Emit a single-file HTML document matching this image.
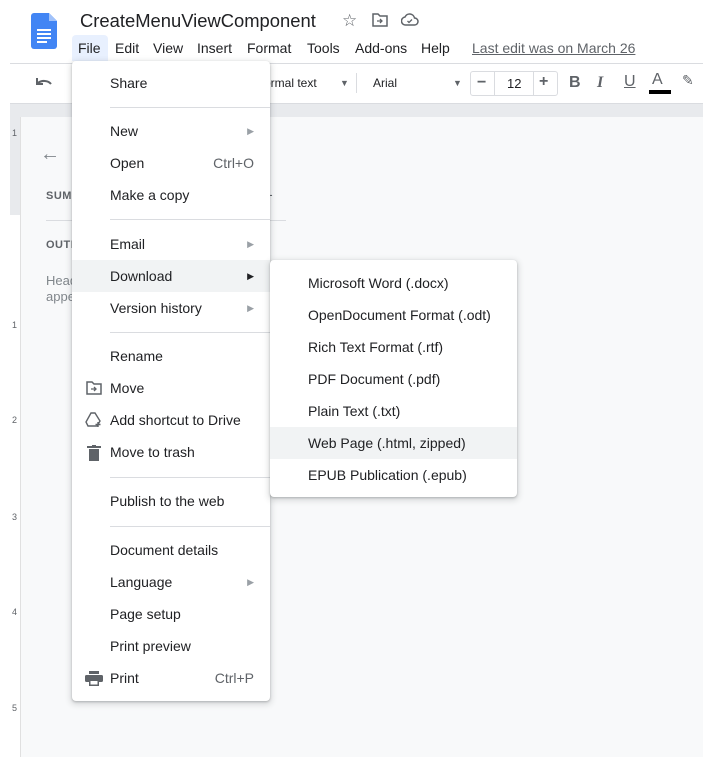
<!DOCTYPE html>
<html><head><meta charset="utf-8"><style>
*{margin:0;padding:0;box-sizing:border-box}
body{width:703px;height:757px;overflow:hidden;background:#fff;font-family:"Liberation Sans",Arial,sans-serif;color:#202124;position:relative}
.abs{position:absolute}
.title{left:80px;top:10px;font-size:18.4px;color:#202124}
.mb{top:40px;font-size:14px;color:#202124}
.doc{left:10px;top:103px;width:693px;height:654px;background:#f8f9fa}
.band{left:10px;top:103px;width:693px;height:14px;background:#e8eaed;border-top:1px solid #dadce0}
.ruler{left:10px;top:117px;width:11px;height:640px;background:#fff;border-right:1px solid #e0e0e0}
.menu{background:#fff;border-radius:4px;box-shadow:0 2px 6px 2px rgba(60,64,67,.15),0 1px 2px rgba(60,64,67,.3)}
.it{position:absolute;left:0;right:0;height:32px;line-height:32px;font-size:14px;color:#202124}
.it .t{position:absolute;left:38px}
.it .s{position:absolute;right:16px;color:#5f6368}
.it .a{position:absolute;right:16px;font-size:9px;color:#9aa0a6}
.sep{position:absolute;left:38px;right:0;height:1px;background:#dadce0}
.sub .it .t{left:38px}
</style></head><body>
<svg class="abs" style="left:31px;top:13px" width="26" height="36" viewBox="0 0 26 36"><path d="M3 0h15l8 8v25a3 3 0 0 1-3 3H3a3 3 0 0 1-3-3V3a3 3 0 0 1 3-3z" fill="#4285f4"/><path d="M18 0v8h8z" fill="#a1c2fa"/><rect x="6" y="16" width="14" height="2" fill="#fff"/><rect x="6" y="20" width="14" height="2" fill="#fff"/><rect x="6" y="24" width="14" height="2" fill="#fff"/><rect x="6" y="28" width="10" height="2" fill="#fff"/></svg>
<div class="abs title">CreateMenuViewComponent</div>
<div class="abs" style="left:342px;top:11px;font-size:17px;color:#5f6368">☆</div>
<svg class="abs" style="left:372px;top:13px" width="16" height="14" viewBox="0 0 16 14"><path d="M1 1h5l2 2h7v10H1z" fill="none" stroke="#5f6368" stroke-width="1.5"/><path d="M5 8h5M8 6l2 2-2 2" fill="none" stroke="#5f6368" stroke-width="1.3"/></svg>
<svg class="abs" style="left:401px;top:13px" width="18" height="13" viewBox="0 0 18 13"><path d="M5 12a4 4 0 0 1-1-8 5 5 0 0 1 9.5 1A3.5 3.5 0 0 1 13.5 12z" fill="none" stroke="#5f6368" stroke-width="1.5"/><path d="M6.5 8l1.5 1.5 3-3" fill="none" stroke="#5f6368" stroke-width="1.3"/></svg>
<div class="abs" style="left:72px;top:35px;width:36px;height:26px;background:#e8f0fe;border-radius:4px 4px 0 0"></div>
<div class="abs mb" style="left:78px">File</div>
<div class="abs mb" style="left:115px">Edit</div>
<div class="abs mb" style="left:153px">View</div>
<div class="abs mb" style="left:197px">Insert</div>
<div class="abs mb" style="left:247px">Format</div>
<div class="abs mb" style="left:307px">Tools</div>
<div class="abs mb" style="left:355px">Add-ons</div>
<div class="abs mb" style="left:421px">Help</div>
<div class="abs mb" style="left:472px;color:#5f6368;text-decoration:underline">Last edit was on March 26</div>
<div class="abs" style="left:10px;top:63px;width:693px;height:1px;background:#dadce0"></div>
<svg class="abs" style="left:35px;top:76px" width="18" height="10" viewBox="0 0 18 10"><path d="M2 2v6h6" fill="none" stroke="#5f6368" stroke-width="2"/><path d="M3 7a8 6 0 0 1 13 1" fill="none" stroke="#5f6368" stroke-width="2"/></svg>
<div class="abs" style="left:264px;top:76px;font-size:12px;color:#202124">ormal text</div>
<div class="abs" style="left:340px;top:78px;font-size:9px;color:#5f6368">▼</div>
<div class="abs" style="left:356px;top:73px;width:1px;height:20px;background:#dadce0"></div>
<div class="abs" style="left:373px;top:76px;font-size:12px;color:#202124">Arial</div>
<div class="abs" style="left:453px;top:78px;font-size:9px;color:#5f6368">▼</div>
<div class="abs" style="left:470px;top:71px;width:88px;height:25px;border:1px solid #dadce0;border-radius:3px"></div>
<div class="abs" style="left:494px;top:71px;width:1px;height:25px;background:#dadce0"></div>
<div class="abs" style="left:533px;top:71px;width:1px;height:25px;background:#dadce0"></div>
<div class="abs" style="left:477px;top:74px;font-size:16px;font-weight:bold;color:#5f6368">−</div>
<div class="abs" style="left:507px;top:76px;font-size:13px">12</div>
<div class="abs" style="left:539px;top:73px;font-size:16px;font-weight:bold;color:#5f6368">+</div>
<div class="abs" style="left:569px;top:74px;font-size:16px;font-weight:bold;color:#5f6368">B</div>
<div class="abs" style="left:597px;top:74px;font-size:16px;font-style:italic;font-family:'Liberation Serif',serif;font-weight:bold;color:#5f6368">I</div>
<div class="abs" style="left:624px;top:73px;font-size:16px;text-decoration:underline;color:#5f6368">U</div>
<div class="abs" style="left:652px;top:71px;font-size:16px;color:#5f6368">A</div>
<div class="abs" style="left:649px;top:90px;width:22px;height:4px;background:#000"></div>
<div class="abs" style="left:682px;top:72px;font-size:14px;color:#5f6368">✎</div>
<div class="abs doc"></div>
<div class="abs band"></div>
<div class="abs ruler"></div>
<div class="abs" style="left:10px;top:117px;width:10px;height:98px;background:#e8eaed"></div>
<div class="abs" style="left:12px;top:128px;font-size:9px;color:#5f6368">1</div>
<div class="abs" style="left:12px;top:320px;font-size:9px;color:#5f6368">1</div>
<div class="abs" style="left:12px;top:415px;font-size:9px;color:#5f6368">2</div>
<div class="abs" style="left:12px;top:512px;font-size:9px;color:#5f6368">3</div>
<div class="abs" style="left:12px;top:607px;font-size:9px;color:#5f6368">4</div>
<div class="abs" style="left:12px;top:703px;font-size:9px;color:#5f6368">5</div>
<div class="abs" style="left:40px;top:143px;font-size:20px;color:#80868b">←</div>
<div class="abs" style="left:46px;top:190px;font-size:11px;font-weight:bold;color:#5f6368;letter-spacing:.5px">SUM</div>
<div class="abs" style="left:46px;top:220px;width:240px;height:1px;background:#dadce0"></div>
<div class="abs" style="left:268px;top:186px;font-size:14px;color:#5f6368">-</div>
<div class="abs" style="left:46px;top:239px;font-size:11px;font-weight:bold;color:#5f6368;letter-spacing:.5px">OUTI</div>
<div class="abs" style="left:46px;top:273px;font-size:13px;color:#80868b;line-height:16px">Head<br>appe</div>
<div class="abs menu" style="left:72px;top:61px;width:198px;height:640px">
<div class="it" style="top:6px"><span class="t">Share</span></div>
<div class="sep" style="top:46px"></div>
<div class="it" style="top:54px"><span class="t">New</span><span class="a">▶</span></div>
<div class="it" style="top:86px"><span class="t">Open</span><span class="s">Ctrl+O</span></div>
<div class="it" style="top:118px"><span class="t">Make a copy</span></div>
<div class="sep" style="top:158px"></div>
<div class="it" style="top:167px"><span class="t">Email</span><span class="a">▶</span></div>
<div class="it" style="top:199px;background:#f1f3f4"><span class="t">Download</span><span class="a" style="color:#202124">▶</span></div>
<div class="it" style="top:231px"><span class="t">Version history</span><span class="a">▶</span></div>
<div class="sep" style="top:271px"></div>
<div class="it" style="top:279px"><span class="t">Rename</span></div>
<div class="it" style="top:311px"><span class="t">Move</span></div>
<div class="it" style="top:343px"><span class="t">Add shortcut to Drive</span></div>
<div class="it" style="top:375px"><span class="t">Move to trash</span></div>
<div class="sep" style="top:416px"></div>
<div class="it" style="top:424px"><span class="t">Publish to the web</span></div>
<div class="sep" style="top:465px"></div>
<div class="it" style="top:473px"><span class="t">Document details</span></div>
<div class="it" style="top:505px"><span class="t">Language</span><span class="a">▶</span></div>
<div class="it" style="top:537px"><span class="t">Page setup</span></div>
<div class="it" style="top:569px"><span class="t">Print preview</span></div>
<div class="it" style="top:601px"><span class="t">Print</span><span class="s">Ctrl+P</span></div>
<svg class="abs" style="left:14px;top:320px" width="16" height="14" viewBox="0 0 16 14"><path d="M1 1h5l2 2h7v10H1z" fill="none" stroke="#5f6368" stroke-width="1.5"/><path d="M5 8h5M8 6l2 2-2 2" fill="none" stroke="#5f6368" stroke-width="1.3"/></svg>
<svg class="abs" style="left:13px;top:351px" width="18" height="16" viewBox="0 0 18 16"><path d="M6 1h4l5 8-3 5H3l-2-4z" fill="none" stroke="#5f6368" stroke-width="1.4"/><path d="M13 10v5M10.5 12.5h5" stroke="#5f6368" stroke-width="1.4"/></svg>
<svg class="abs" style="left:15px;top:384px" width="14" height="16" viewBox="0 0 14 16"><rect x="2" y="4" width="10" height="12" fill="#5f6368"/><rect x="0" y="1" width="14" height="2" fill="#5f6368"/><rect x="5" y="0" width="4" height="2" fill="#5f6368"/></svg>
<svg class="abs" style="left:13px;top:610px" width="18" height="15" viewBox="0 0 18 15"><rect x="4" y="0" width="10" height="3" fill="#5f6368"/><rect x="0" y="4" width="18" height="7" rx="1.5" fill="#5f6368"/><rect x="4" y="9" width="10" height="6" fill="#5f6368"/><rect x="5.5" y="10" width="7" height="3.5" fill="#fff"/></svg>
</div>
<div class="abs menu sub" style="left:270px;top:260px;width:247px;height:237px">
<div class="it" style="top:7px"><span class="t">Microsoft Word (.docx)</span></div>
<div class="it" style="top:39px"><span class="t">OpenDocument Format (.odt)</span></div>
<div class="it" style="top:71px"><span class="t">Rich Text Format (.rtf)</span></div>
<div class="it" style="top:103px"><span class="t">PDF Document (.pdf)</span></div>
<div class="it" style="top:135px"><span class="t">Plain Text (.txt)</span></div>
<div class="it" style="top:167px;background:#f1f3f4"><span class="t">Web Page (.html, zipped)</span></div>
<div class="it" style="top:199px"><span class="t">EPUB Publication (.epub)</span></div>
</div>
</body></html>
